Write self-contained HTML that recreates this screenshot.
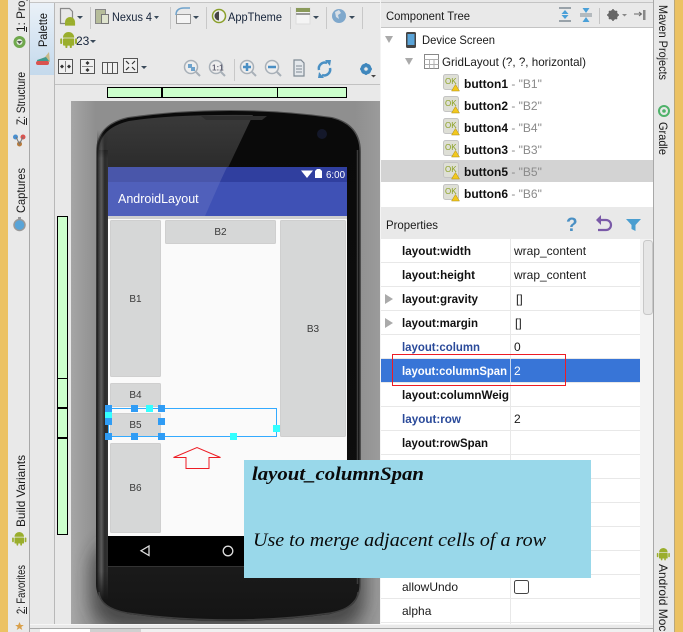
<!DOCTYPE html>
<html><head><meta charset="utf-8"><style>
html,body{margin:0;padding:0;background:#e8e8e8;width:683px;height:632px;overflow:hidden}
svg{display:block}
text{font-family:"Liberation Sans",sans-serif;font-size:12px;fill:#1a1a1a}
.b{font-weight:bold;fill:#111}
.g{fill:#8a8a8a}
.blue{font-weight:bold;fill:#2a4a9a}
.h{font-family:"Liberation Serif",serif;font-style:italic;fill:#0a0a0a}
.bt{font-size:10px;fill:#3a3a3a}
</style></head><body>
<svg width="683" height="632" viewBox="0 0 683 632" xmlns="http://www.w3.org/2000/svg">
<defs>
<linearGradient id="bgl" x1="0" x2="1" y1="0" y2="0"><stop offset="0" stop-color="#a6a6a6"/><stop offset=".08" stop-color="#8f8f8f"/><stop offset=".92" stop-color="#8f8f8f"/><stop offset="1" stop-color="#9b9b9b"/></linearGradient>
<linearGradient id="tab" x1="0" x2="0" y1="0" y2="1"><stop offset="0" stop-color="#eaf1f8"/><stop offset="1" stop-color="#c4d9ec"/></linearGradient>
<linearGradient id="body" x1="0" x2="0" y1="0" y2="1"><stop offset="0" stop-color="#0a0a0a"/><stop offset=".8" stop-color="#0e0e0e"/><stop offset=".9" stop-color="#1a1a1a"/><stop offset="1" stop-color="#141414"/></linearGradient>
<linearGradient id="edge" x1="0" x2="1" y1="0" y2="0"><stop offset="0" stop-color="#1a1a1a"/><stop offset=".15" stop-color="#3a3a3a"/><stop offset=".4" stop-color="#5c5c5c"/><stop offset=".7" stop-color="#2a2a2a"/><stop offset="1" stop-color="#333"/></linearGradient>
<linearGradient id="gloss" x1="0" x2="0" y1="0" y2="1"><stop offset="0" stop-color="#3a3a3a"/><stop offset="1" stop-color="#1e1e1e"/></linearGradient>
<linearGradient id="fade" x1="0" x2="0" y1="0" y2="1"><stop offset="0" stop-color="#000"/><stop offset=".06" stop-color="#fff"/><stop offset=".94" stop-color="#fff"/><stop offset="1" stop-color="#000"/></linearGradient>
<mask id="edgemask" maskUnits="userSpaceOnUse" x="90" y="130" width="30" height="470"><rect x="90" y="130" width="30" height="470" fill="url(#fade)"/></mask>
<filter id="blur" x="-20%" y="-20%" width="140%" height="140%"><feGaussianBlur stdDeviation="9"/></filter>
<g id="ok"><rect x="0.5" y="0.5" width="15" height="15" rx="2" fill="#dedfd6" stroke="#c4c4c4"/><text x="2" y="10" style="font-size:8px;fill:#8aa020">OK</text><path d="M12.500 10.500l4 6.500h-8z" fill="#f2c81e" stroke="#a88a10" stroke-width=".5"/></g>
<g id="droid" fill="#9aae2c"><path d="M0 7a7 7 0 0 1 14 0z"/><rect x="0" y="8" width="14" height="9" rx="1"/><rect x="-3.500" y="8" width="2.500" height="7" rx="1.200"/><rect x="15" y="8" width="2.500" height="7" rx="1.200"/><rect x="3" y="16" width="2.500" height="4" rx="1"/><rect x="8.500" y="16" width="2.500" height="4" rx="1"/></g>
<clipPath id="surf"><rect x="71" y="101" width="309" height="523"/></clipPath>
</defs>

<rect width="683" height="632" fill="#e8e8e8"/>
<!-- outer strips -->
<rect x="0" y="0" width="8" height="632" fill="#ecc263"/>
<rect x="675" y="0" width="8" height="632" fill="#ecc263"/>
<rect x="674" y="0" width="1" height="632" fill="#b9a77c"/>
<rect x="8" y="0" width="21" height="632" fill="#e9e9e9"/>
<rect x="29" y="0" width="1" height="632" fill="#a8a8a8"/>
<rect x="54" y="3" width="1" height="621" fill="#b8b8b8"/>
<rect x="30" y="0" width="350" height="3" fill="#f2f2f2"/>
<rect x="30" y="2" width="350" height="1" fill="#c4c4c4"/>

<!-- left strip labels -->
<g>
<text transform="translate(25,32) rotate(-90)" textLength="34" lengthAdjust="spacingAndGlyphs">1: Proj</text>
<rect x="26" y="27" width="1" height="5" fill="#222"/>
<circle cx="19.500" cy="42" r="6" fill="#6fa84c"/><circle cx="19.500" cy="42" r="3" fill="#dfe8d8"/><path d="M17 41h5l-2.500 3z" fill="#555"/>
<text transform="translate(25,125) rotate(-90)" textLength="53" lengthAdjust="spacingAndGlyphs">Z: Structure</text>
<rect x="26" y="118" width="1" height="7" fill="#222"/>
<circle cx="15.500" cy="137" r="2.500" fill="#4a90d0"/><circle cx="23" cy="137" r="2.500" fill="#d9534f"/><circle cx="19.500" cy="144" r="2.500" fill="#b87a3a"/><path d="M16 137l3.500 7 3.500-7" fill="none" stroke="#777"/>
<text transform="translate(25,213) rotate(-90)" textLength="45" lengthAdjust="spacingAndGlyphs">Captures</text>
<circle cx="19.500" cy="225" r="5.500" fill="#58a4d8" stroke="#999" stroke-width="1.500"/><rect x="18" y="217" width="3" height="2" fill="#999"/>
<text transform="translate(25,527) rotate(-90)" textLength="72" lengthAdjust="spacingAndGlyphs">Build Variants</text>
<g transform="translate(14.500,532) scale(.68)"><use href="#droid"/></g>
<text transform="translate(25,614) rotate(-90)" textLength="49" lengthAdjust="spacingAndGlyphs">2: Favorites</text>
<rect x="26" y="607" width="1" height="7" fill="#222"/>
<path d="M19.500 622l1.300 3h3l-2.500 2 1 3-2.800-1.800-2.800 1.800 1-3-2.500-2h3z" fill="#d9a04a"/>
</g>

<!-- palette tab -->
<rect x="30" y="3" width="24" height="72" fill="url(#tab)"/>
<text transform="translate(47,47) rotate(-90)" style="fill:#111" textLength="34" lengthAdjust="spacingAndGlyphs">Palette</text>
<path d="M38 60l7-3 4-5 1 10z" fill="#c9b98a"/><path d="M37 60l9-3 3 4-11 3z" fill="#3f9a8f"/><rect x="36" y="61" width="13" height="4" rx="2" fill="#d9534f"/>

<!-- toolbar -->
<rect x="55" y="3" width="325" height="81" fill="#e9e9e9"/>
<rect x="55" y="84" width="325" height="1" fill="#c2c2c2"/>
<g fill="#c8c8c8"><rect x="90" y="7" width="1" height="22"/><rect x="170" y="7" width="1" height="22"/><rect x="206" y="7" width="1" height="22"/><rect x="290" y="7" width="1" height="22"/><rect x="326" y="7" width="1" height="22"/><rect x="362" y="7" width="1" height="22"/><rect x="234" y="59" width="1" height="22"/></g>
<!-- device icon -->
<path d="M60.500 8.500h9l3 3v12h-12z" fill="#e8e8e8" stroke="#888" stroke-width="1.200"/>
<g transform="translate(65,17) scale(.72)"><path d="M0 7a7 7 0 0 1 14 0z" fill="#9aae2c"/><rect x="0" y="7" width="14" height="5" fill="#9aae2c"/></g>
<path d="M77 16h6l-3 3z" fill="#3a4a5a"/>
<!-- nexus -->
<rect x="95.500" y="9.500" width="10" height="14" fill="#b6bd9a" stroke="#888"/><rect x="101.500" y="14.500" width="7" height="9" fill="#dfe4ce" stroke="#777"/>
<text x="112" y="21" style="fill:#16243a" textLength="40" lengthAdjust="spacingAndGlyphs">Nexus 4</text><path d="M154 16h5l-2.500 3z" fill="#3a4a5a"/>
<!-- rotate -->
<rect x="176.500" y="14.500" width="14" height="9" fill="#f4f4f4" stroke="#999"/><path d="M176 15q0-7 8-7h6" fill="none" stroke="#6fa3cc" stroke-width="1.500"/>
<path d="M193 16h6l-3 3z" fill="#3a4a5a"/>
<!-- theme -->
<circle cx="219" cy="16" r="6.500" fill="#f0f0f0" stroke="#8a9f2a" stroke-width="1.500"/><path d="M219 11.500a4.500 4.500 0 0 0 0 9z" fill="#444"/>
<text x="228" y="21" style="fill:#16243a" textLength="54" lengthAdjust="spacingAndGlyphs">AppTheme</text>
<!-- layout icon -->
<rect x="296" y="8" width="14" height="16" fill="#f4f4f4" stroke="#ddd"/><rect x="296" y="8" width="14" height="4" fill="#8a9a5a"/><rect x="296" y="13" width="14" height="2" fill="#9a9a9a"/>
<path d="M313 16h6l-3 3z" fill="#3a4a5a"/>
<!-- globe -->
<circle cx="339" cy="16" r="7" fill="#7fa8cc"/><path d="M335 12l4-2 2 3-3 2 1 4-3-2z" fill="#d8dfe6"/>
<path d="M349 16h6l-3 3z" fill="#3a4a5a"/>
<!-- api row -->
<g transform="translate(63,32) scale(.8)"><use href="#droid"/></g>
<text x="76" y="45" style="fill:#16243a">23</text><path d="M90 40h6l-3 3z" fill="#3a4a5a"/>
<!-- row 3 icons -->
<g fill="#f0f0f0" stroke="#555"><rect x="58.500" y="59.500" width="14" height="14"/><rect x="80.500" y="59.500" width="14" height="14"/><rect x="102.500" y="62.500" width="15" height="11"/><rect x="123.500" y="58.500" width="14" height="14"/></g>
<path d="M60 66.500h4l-2-2zM71 66.500h-4l2-2zM60 66.500h4l-2 2zM71 66.500h-4l2 2z" fill="#333"/><rect x="65" y="61" width="1" height="11" fill="#888"/>
<path d="M87.500 61v4l-2-2zM87.500 72v-4l-2 2zM87.500 61v4l2-2zM87.500 72v-4l2 2z" fill="#333"/><rect x="82" y="66" width="11" height="1" fill="#888"/>
<path d="M107.500 62v11M112.500 62v11" stroke="#555"/>
<path d="M126 61l3 3M135 61l-3 3M126 70l3-3M135 70l-3-3" stroke="#333" stroke-width="1.200"/>
<path d="M141 66h6l-3 3z" fill="#3a4a5a"/>
<!-- zoom icons -->
<g fill="#eee" stroke="#a8b0b8" stroke-width="1.500">
<circle cx="191" cy="67" r="6.500"/><path d="M196 72l4 4" stroke-width="2"/>
<circle cx="216" cy="67" r="6.500"/><path d="M221 72l4 4" stroke-width="2"/>
<circle cx="247" cy="67" r="6.500"/><path d="M252 72l4 4" stroke-width="2"/>
<circle cx="272" cy="67" r="6.500"/><path d="M277 72l4 4" stroke-width="2"/>
</g>
<rect x="188" y="64" width="4" height="4" fill="#6fa3cc"/><rect x="191" y="67" width="4" height="4" fill="#6fa3cc"/>
<text x="212" y="70.500" style="font-size:8px;font-weight:bold;fill:#667">1:1</text>
<path d="M247 63v8M243 67h8" stroke="#4a8fc4" stroke-width="2.500"/>
<path d="M268 67h8" stroke="#4a8fc4" stroke-width="2.500"/>
<path d="M294 60h7l3 3v13h-10z" fill="#e4e8ec" stroke="#7f8a94" stroke-width="1.200"/><path d="M296 66h6M296 69h6M296 72h6" stroke="#7f8a94"/>
<path d="M319 70a6 6 0 0 1 8-7M330 68a6 6 0 0 1-8 7" fill="none" stroke="#4a90c4" stroke-width="2.500"/><path d="M325 60l6 0-1 6zM324 78l-6 0 1-6z" fill="#4a90c4"/>
<circle cx="366" cy="69" r="4" fill="none" stroke="#3f87bd" stroke-width="3"/><path d="M366 63v12M360 69h12M362 65l8 8M370 65l-8 8" stroke="#3f87bd" stroke-width="1.600"/><circle cx="366" cy="69" r="1.800" fill="#e9e9e9"/>
<path d="M371 75h5l-2.500 2.500z" fill="#444"/>

<!-- design surface -->
<rect x="55" y="85" width="325" height="539" fill="#e9e9e9"/>
<rect x="71" y="101" width="309" height="523" fill="url(#bgl)"/>
<rect x="380" y="0" width="1" height="624" fill="#f4f4f4"/>
<!-- rulers -->
<rect x="107.500" y="87.500" width="239" height="10" fill="#ccffcc" stroke="#000"/>
<rect x="161" y="87" width="2" height="11" fill="#000"/><rect x="277" y="87" width="1" height="11" fill="#000"/>
<rect x="57.500" y="216.500" width="10" height="318" fill="#ccffcc" stroke="#000"/>
<rect x="57" y="378" width="11" height="1" fill="#000"/><rect x="57" y="407" width="11" height="2" fill="#000"/><rect x="57" y="437" width="11" height="2" fill="#000"/>

<!-- phone -->
<g clip-path="url(#surf)"><rect x="92" y="540" width="272" height="90" rx="30" fill="#333" filter="url(#blur)" opacity=".75"/></g>
<path d="M96 152q0-28 32-35q50-7 102-7q52 0 102 7q29 7 29 35v432q0 23-30 31q-50 7-101 7q-51 0-101-7q-33-8-33-31z" fill="#4e4e4e"/>
<path d="M97 152q0-27 31.500-34q50-7 101.500-7q51.500 0 101.500 7q28 7 28 34v432q0 22-29 30q-50 7-101 7q-51 0-101-7q-32.500-8-32.500-30z" fill="url(#body)"/>
<path d="M99 150q1-22 30-29q45-7 124-6l-48 101h-97v-66z" fill="url(#gloss)"/>
<rect x="97" y="130" width="11" height="470" fill="url(#edge)" mask="url(#edgemask)"/>
<path d="M99 592q1 16 28 21q50 7 103 7q53 0 101-7q26-5 27-21" fill="none" stroke="#3e3e3e" stroke-width="1.500"/>
<path d="M357.500 150v434" stroke="#3c3c3c" stroke-width="1.500" fill="none"/>
<path d="M201 116h66l-5 4h-56z" fill="#2e2e2e"/>
<circle cx="322" cy="134" r="5" fill="#14182a"/>
<!-- screen -->
<rect x="108" y="167" width="239" height="15" fill="#303f9f"/>
<rect x="108" y="182" width="239" height="34" fill="#3f51b5"/>
<path d="M108 167h119l-7 15h-112z" fill="#fff" opacity=".12"/>
<path d="M108 182h112l-15 34h-97z" fill="#fff" opacity=".09"/>
<rect x="108" y="216" width="239" height="320" fill="#fafafa"/>
<rect x="108" y="216" width="239" height="3" fill="#cfcfcf"/>
<path d="M301 170.500h12l-6 7.500z" fill="#fff"/><path d="M315 171l2-2h3l2 2v7h-7z" fill="#fff"/>
<text x="326" y="178" style="font-size:10.500px;fill:#fff" textLength="19" lengthAdjust="spacingAndGlyphs">6:00</text>
<text x="118" y="203" style="fill:#fff;font-size:12.500px">AndroidLayout</text>
<!-- buttons -->
<g fill="#d6d7d7" stroke="#cfcfcf">
<rect x="110.500" y="220.500" width="50" height="156" rx="1"/>
<rect x="165.500" y="220.500" width="110" height="23" rx="1"/>
<rect x="280.500" y="220.500" width="65" height="216" rx="1"/>
<rect x="110.500" y="383.500" width="50" height="23" rx="1"/>
<rect x="110.500" y="413.500" width="50" height="23" rx="1"/>
<rect x="110.500" y="443.500" width="50" height="89" rx="1"/>
</g>
<g text-anchor="middle">
<text x="135.500" y="302" class="bt">B1</text>
<text x="220.500" y="235" class="bt">B2</text>
<text x="313" y="332" class="bt">B3</text>
<text x="135.500" y="398" class="bt">B4</text>
<text x="135.500" y="428" class="bt">B5</text>
<text x="135.500" y="491" class="bt">B6</text>
</g>
<!-- nav bar -->
<rect x="108" y="536" width="239" height="30" fill="#000"/>
<rect x="108" y="566" width="239" height="1" fill="#333"/>
<path d="M149 546v9.500l-8-4.750z" fill="none" stroke="#ddd" stroke-width="1.300"/>
<circle cx="228" cy="551" r="4.800" fill="none" stroke="#ddd" stroke-width="1.300"/>
<!-- selection -->
<rect x="108.500" y="408.500" width="168" height="28" fill="none" stroke="#33aaff"/>
<g fill="#2f9cf5">
<rect x="105" y="405" width="7" height="7"/><rect x="131" y="405" width="7" height="7"/><rect x="158" y="405" width="7" height="7"/>
<rect x="105" y="418" width="7" height="7"/><rect x="158" y="418" width="7" height="7"/>
<rect x="105" y="433" width="7" height="7"/><rect x="131" y="433" width="7" height="7"/><rect x="158" y="433" width="7" height="7"/>
</g>
<g fill="#33ffff"><rect x="146" y="405" width="7" height="7"/><rect x="105" y="412" width="7" height="6"/><rect x="273" y="425" width="7" height="7"/><rect x="230" y="433" width="7" height="7"/></g>
<!-- arrow -->
<path d="M173.500 457.500l23.500-10 23.500 10h-11.500v11h-23v-11z" fill="none" stroke="#ed1c24" stroke-width="1"/>

<!-- right panel -->
<rect x="381" y="3" width="272" height="621" fill="#e9e9e9"/>
<rect x="381" y="2" width="272" height="1" fill="#c4c4c4"/>
<rect x="381" y="27" width="272" height="1" fill="#c4c4c4"/>
<rect x="381" y="28" width="272" height="179" fill="#fff"/>
<rect x="381" y="160" width="272" height="22" fill="#d3d3d3"/>
<rect x="653" y="0" width="1" height="632" fill="#a8a8a8"/>
<text x="386" y="20" textLength="84" lengthAdjust="spacingAndGlyphs">Component Tree</text>
<path d="M559 8h12M559 21h12" stroke="#7f8a94" stroke-width="1.500"/><path d="M565 10l3.500 4h-7zM565 19l3.500-4h-7z" fill="#4aa0d8"/>
<path d="M580 14h12M580 16h12" stroke="#7f8a94" stroke-width="1"/><path d="M586 13l3.500-5h-7zM586 17l3.500 5h-7z" fill="#4aa0d8"/>
<rect x="599" y="8" width="1" height="16" fill="#c4c4c4"/>
<circle cx="613" cy="15" r="3.500" fill="none" stroke="#666" stroke-width="3"/><path d="M613 9v12M607 15h12M609 11l8 8M617 11l-8 8" stroke="#666" stroke-width="1.500"/>
<path d="M622 14h5l-2.500 2.500z" fill="#888"/>
<path d="M634 14h7M639 12l2.500 2-2.500 2" fill="none" stroke="#666"/><rect x="643" y="10" width="2.500" height="10" fill="#888"/>
<!-- tree -->
<path d="M385 36h8l-4 7z" fill="#aaa"/><path d="M405 58h8l-4 7z" fill="#aaa"/>
<rect x="406" y="32" width="10" height="16" rx="1.500" fill="#444"/><rect x="407.500" y="34" width="7" height="11" fill="#5aa4d8"/>
<text x="422" y="44" textLength="73" lengthAdjust="spacingAndGlyphs">Device Screen</text>
<rect x="424.500" y="54.500" width="14" height="14" fill="#fff" stroke="#888"/><path d="M424.500 59.500h14M424.500 64.500h14M429.500 59.500v9M434 59.500v9" stroke="#b0b0b0"/>
<text x="442" y="66" textLength="144" lengthAdjust="spacingAndGlyphs">GridLayout (?, ?, horizontal)</text>
<use href="#ok" x="443" y="74"/><use href="#ok" x="443" y="96"/><use href="#ok" x="443" y="118"/><use href="#ok" x="443" y="140"/><use href="#ok" x="443" y="162"/><use href="#ok" x="443" y="184"/>
<text x="464" y="88" class="b">button1<tspan class="g" style="font-weight:normal"> - "B1"</tspan></text>
<text x="464" y="110" class="b">button2<tspan class="g" style="font-weight:normal"> - "B2"</tspan></text>
<text x="464" y="132" class="b">button4<tspan class="g" style="font-weight:normal"> - "B4"</tspan></text>
<text x="464" y="154" class="b">button3<tspan class="g" style="font-weight:normal"> - "B3"</tspan></text>
<text x="464" y="176" class="b">button5<tspan class="g" style="font-weight:normal"> - "B5"</tspan></text>
<text x="464" y="198" class="b">button6<tspan class="g" style="font-weight:normal"> - "B6"</tspan></text>
<!-- properties header -->
<rect x="381" y="207" width="272" height="32" fill="#e9e9e9"/>
<text x="386" y="229" textLength="52" lengthAdjust="spacingAndGlyphs">Properties</text>
<text x="566" y="231" style="font-size:19px;font-weight:bold;fill:#4a90c4">?</text>
<path d="M598 220h8a5 5 0 0 1 0 10h-8" fill="none" stroke="#7a5aa8" stroke-width="2.200"/><path d="M601 215l-5 5 5 5z" fill="#7a5aa8"/>
<path d="M626 219h15l-5.500 6v6l-4-2v-4z" fill="#4a9ed0"/>
<!-- table -->
<rect x="381" y="239" width="259" height="385" fill="#fff"/>
<rect x="640" y="239" width="13" height="385" fill="#f3f3f3"/>
<rect x="643.500" y="240.500" width="9" height="74" rx="3" fill="#e6e6e6" stroke="#c8c8c8"/>
<g fill="#e8e8e8">
<rect x="381" y="262" width="259" height="1"/><rect x="381" y="286" width="259" height="1"/><rect x="381" y="310" width="259" height="1"/><rect x="381" y="334" width="259" height="1"/><rect x="381" y="358" width="259" height="1"/><rect x="381" y="382" width="259" height="1"/><rect x="381" y="406" width="259" height="1"/><rect x="381" y="430" width="259" height="1"/><rect x="381" y="454" width="259" height="1"/><rect x="381" y="478" width="259" height="1"/><rect x="381" y="502" width="259" height="1"/><rect x="381" y="526" width="259" height="1"/><rect x="381" y="550" width="259" height="1"/><rect x="381" y="574" width="259" height="1"/><rect x="381" y="598" width="259" height="1"/><rect x="381" y="622" width="259" height="1"/>
<rect x="510" y="239" width="1" height="385"/>
</g>
<rect x="381" y="359" width="259" height="23" fill="#3875d7"/>
<rect x="510" y="359" width="1" height="23" fill="#c6d5ee"/>
<path d="M385 294l8 5-8 5zM385 318l8 5-8 5z" fill="#aaa"/>
<text x="402" y="255" class="b" textLength="69" lengthAdjust="spacingAndGlyphs">layout:width</text><text x="514" y="255">wrap_content</text>
<text x="402" y="279" class="b" textLength="73" lengthAdjust="spacingAndGlyphs">layout:height</text><text x="514" y="279">wrap_content</text>
<text x="402" y="303" class="b" textLength="76" lengthAdjust="spacingAndGlyphs">layout:gravity</text><text x="516" y="303">[]</text>
<text x="402" y="327" class="b" textLength="76" lengthAdjust="spacingAndGlyphs">layout:margin</text><text x="515" y="327">[]</text>
<text x="402" y="351" class="blue" textLength="78" lengthAdjust="spacingAndGlyphs">layout:column</text><text x="514" y="351">0</text>
<text x="402" y="375" class="b" style="fill:#fff" textLength="105" lengthAdjust="spacingAndGlyphs">layout:columnSpan</text><text x="514" y="375" style="fill:#fff">2</text>
<svg x="402" y="387" width="107" height="16"><text x="0" y="12" class="b" textLength="118" lengthAdjust="spacingAndGlyphs">layout:columnWeight</text></svg>
<text x="402" y="423" class="blue" textLength="59" lengthAdjust="spacingAndGlyphs">layout:row</text><text x="514" y="423">2</text>
<text x="402" y="447" class="b" textLength="86" lengthAdjust="spacingAndGlyphs">layout:rowSpan</text>
<text x="402" y="591">allowUndo</text>
<rect x="514.500" y="580.500" width="14" height="13" rx="2" fill="#fff" stroke="#444"/>
<text x="402" y="615">alpha</text>
<!-- red highlight -->
<rect x="392.500" y="354.500" width="173" height="31" fill="none" stroke="#ed1c24"/>
<!-- note -->
<rect x="244" y="460" width="347" height="118" fill="#99d8ea"/>
<text x="252" y="480" class="h" style="font-size:19px;font-weight:bold" textLength="172" lengthAdjust="spacingAndGlyphs">layout_columnSpan</text>
<text x="253" y="546" class="h" style="font-size:19px" textLength="293" lengthAdjust="spacingAndGlyphs">Use to merge adjacent cells of a row</text>

<!-- right strip -->
<text transform="translate(659,5) rotate(90)" textLength="75" lengthAdjust="spacingAndGlyphs">Maven Projects</text>
<circle cx="664" cy="111" r="5" fill="none" stroke="#4fb26a" stroke-width="2"/><circle cx="664" cy="111" r="1.800" fill="#4fb26a"/>
<text transform="translate(659,122) rotate(90)" textLength="33" lengthAdjust="spacingAndGlyphs">Gradle</text>
<g transform="translate(659,548) scale(.62)"><use href="#droid"/></g>
<text transform="translate(659,564) rotate(90)">Android Moc</text>

<!-- bottom -->
<rect x="30" y="624" width="623" height="1" fill="#f6f6f6"/>
<rect x="30" y="625" width="623" height="3" fill="#e9e9e9"/>
<rect x="30" y="628" width="623" height="1" fill="#a8a8a8"/>
<rect x="30" y="629" width="623" height="3" fill="#e9e9e9"/>
<rect x="40" y="629" width="50" height="3" fill="#fff"/>
<rect x="90" y="629" width="51" height="3" fill="#d0d0d0"/>
<rect x="141" y="629" width="512" height="3" fill="#f0f0f0"/>
</svg>
</body></html>
